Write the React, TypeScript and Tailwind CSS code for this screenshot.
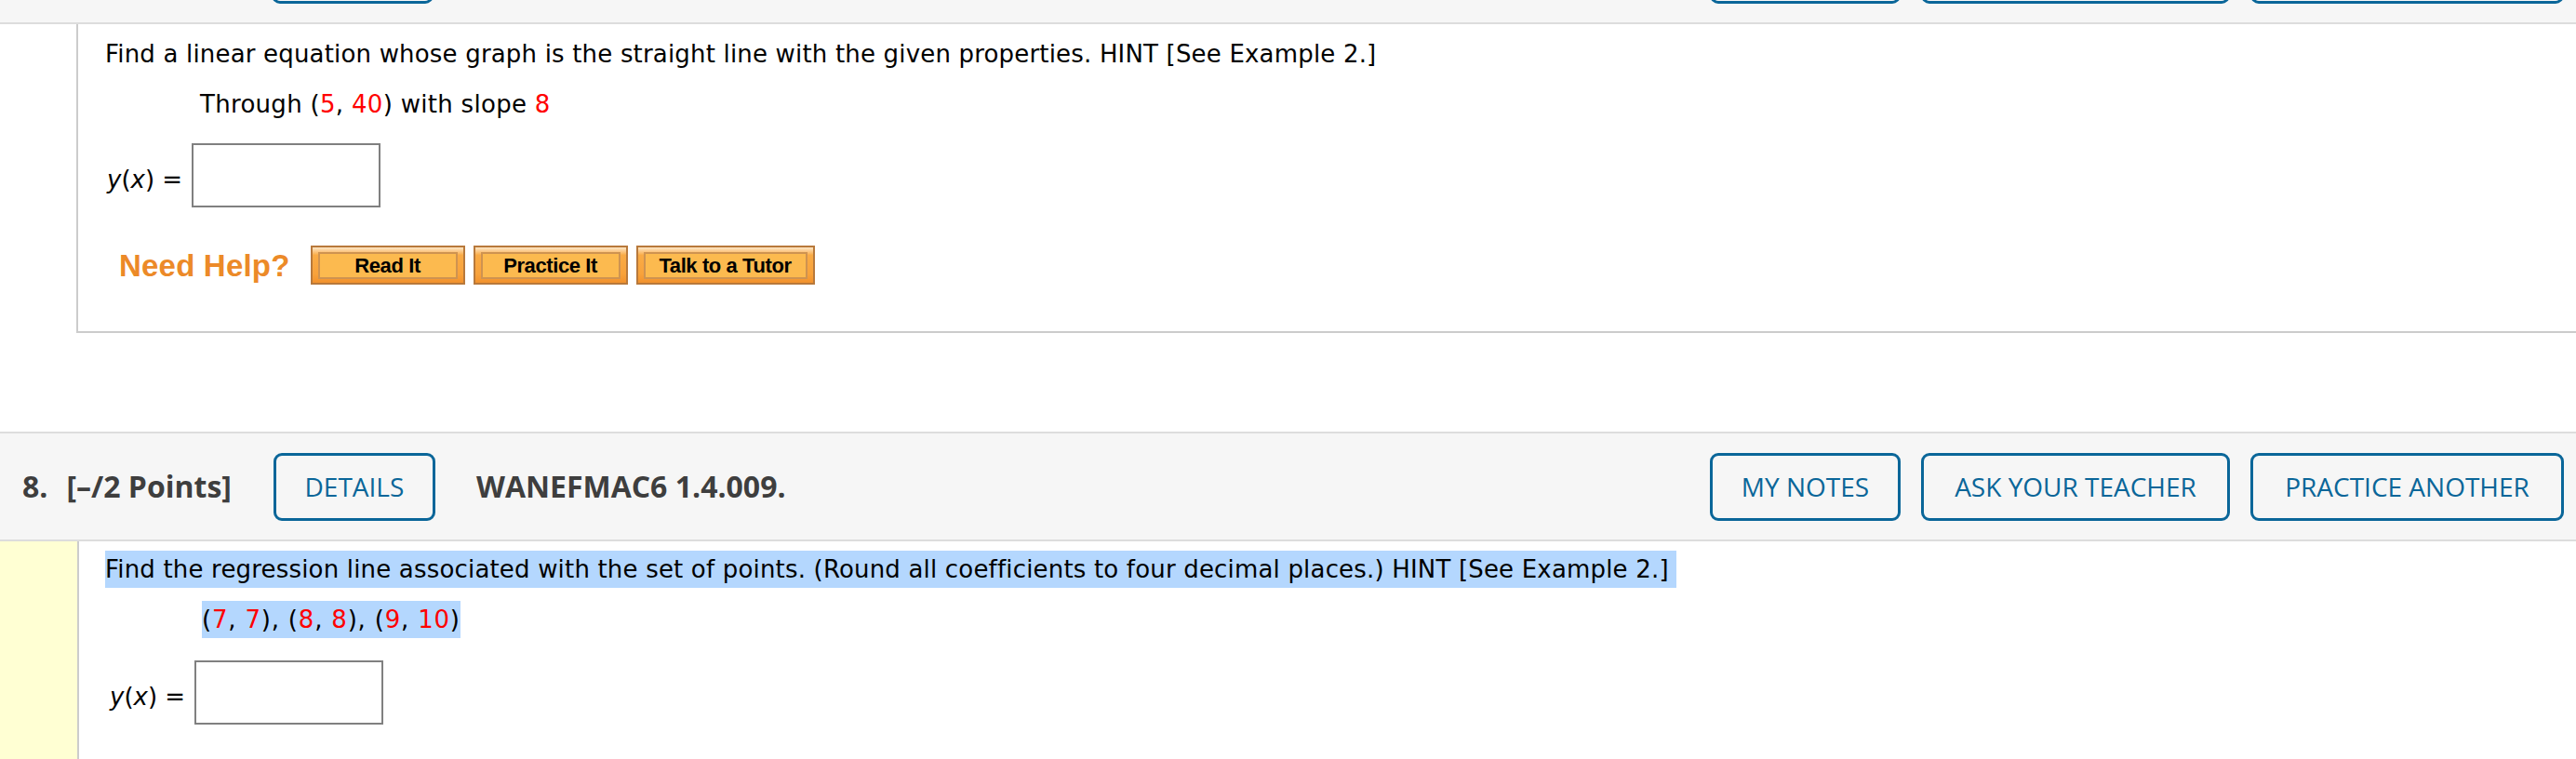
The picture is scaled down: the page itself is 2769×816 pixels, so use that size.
import React from "react";

const blueBtn =
  "h-[73px] shrink-0 rounded-[9px] border-[3px] border-[#0a6699] flex items-center justify-center text-[28px] font-medium text-[#0a6699] font-['Open_Sans',sans-serif] bg-transparent";

function HelpButton({ label, w }: { label: string; w: string }) {
  return (
    <div
      className={`${w} h-[42px] shrink-0 border-2 border-[#b8793b] pt-[5px] pb-[4px] px-[6px] bg-[linear-gradient(to_bottom,#fee6c6_0%,#f9ab46_22%,#f8a23b_75%,#f2922d_100%)]`}
    >
      <div className="h-full border-2 border-[#cf9350] bg-[#fcba4f] flex items-center justify-center text-[22px] font-bold text-black leading-none font-['Liberation_Sans',Arial,sans-serif] tracking-[-0.4px]">
        {label}
      </div>
    </div>
  );
}

function Red({ children }: { children: React.ReactNode }) {
  return <span className="text-[#ff0000]">{children}</span>;
}

function AnswerRow({ className }: { className: string }) {
  return (
    <div className={`flex items-center ${className}`}>
      <span className="mt-[9px] whitespace-pre">
        <i>y</i>(<i>x</i>) =
      </span>
      <div className="ml-[10px] w-[203px] h-[69px] border-2 border-[#808080] bg-white" />
    </div>
  );
}

export default function App() {
  return (
    <div className="w-[2769px] h-[816px] overflow-hidden bg-white flex flex-col">
      {/* bottom of previous question header */}
      <div className="h-[26px] shrink-0 bg-[#f6f6f6] border-b-2 border-[#dddddd] flex items-end justify-between pb-[20px] pl-[292px] pr-[13px] overflow-hidden">
        <div className={`${blueBtn} w-[174px]`} />
        <div className="flex gap-[22px] items-end">
          <div className={`${blueBtn} w-[205px]`} />
          <div className={`${blueBtn} w-[332px]`} />
          <div className={`${blueBtn} w-[337px]`} />
        </div>
      </div>

      {/* question 7 body */}
      <div className="flex h-[332px] shrink-0 text-[26px] leading-[40px] text-black font-['DejaVu_Sans',Verdana,sans-serif]">
        <div className="w-[82px] shrink-0" />
        <div className="flex-1 border-l-2 border-b-2 border-[#cccccc] pl-[29px] pt-[12px]">
          <div className="whitespace-nowrap tracking-[0.18px]">
            Find a linear equation whose graph is the straight line with the given properties. HINT [See Example 2.]
          </div>
          <div className="mt-[14px] pl-[102px] whitespace-nowrap tracking-[0.3px]">
            Through (<Red>5</Red>, <Red>40</Red>) with slope <Red>8</Red>
          </div>
          <AnswerRow className="mt-[22px] pl-[2px]" />
          <div className="mt-[41px] pl-[15px] flex items-center">
            <span className="text-[33px] leading-none font-bold text-[#ec8a28] font-['Liberation_Sans',Arial,sans-serif] tracking-[0.2px]">
              Need Help?
            </span>
            <div className="ml-[22px] flex gap-[9px]">
              <HelpButton label="Read It" w="w-[166px]" />
              <HelpButton label="Practice It" w="w-[166px]" />
              <HelpButton label="Talk to a Tutor" w="w-[192px]" />
            </div>
          </div>
        </div>
      </div>

      <div className="h-[106px] shrink-0" />

      {/* question 8 header */}
      <div className="h-[118px] shrink-0 bg-[#f6f6f6] border-y-2 border-[#dddddd] flex items-center pl-[24px] pr-[13px] font-['Open_Sans',sans-serif] text-[#3e3e3e]">
        <span className="text-[32px] font-bold">8.</span>
        <span className="ml-[20px] text-[32px] font-bold">[–/2 Points]</span>
        <button className={`${blueBtn} ml-[45px] w-[174px]`}>DETAILS</button>
        <span className="ml-[44px] text-[32px] font-bold">WANEFMAC6 1.4.009.</span>
        <div className="ml-auto flex gap-[22px]">
          <button className={`${blueBtn} w-[205px]`}>MY NOTES</button>
          <button className={`${blueBtn} w-[332px]`}>ASK YOUR TEACHER</button>
          <button className={`${blueBtn} w-[337px]`}>PRACTICE ANOTHER</button>
        </div>
      </div>

      {/* question 8 body */}
      <div className="flex flex-1 text-[26px] leading-[40px] text-black font-['DejaVu_Sans',Verdana,sans-serif]">
        <div className="w-[83px] shrink-0 bg-[#ffffd3]" />
        <div className="flex-1 border-l-2 border-[#cccccc] pl-[28px] pt-[10px]">
          <div className="w-fit whitespace-nowrap bg-[#b4d7fe] pr-[8px] tracking-[0.18px]">
            Find the regression line associated with the set of points. (Round all coefficients to four decimal places.) HINT [See Example 2.]
          </div>
          <div className="mt-[14px] ml-[104px] w-fit whitespace-nowrap bg-[#b4d7fe] tracking-[0.8px]">
            (<Red>7</Red>, <Red>7</Red>), (<Red>8</Red>, <Red>8</Red>), (<Red>9</Red>, <Red>10</Red>)
          </div>
          <AnswerRow className="mt-[24px] pl-[5px]" />
        </div>
      </div>
    </div>
  );
}
